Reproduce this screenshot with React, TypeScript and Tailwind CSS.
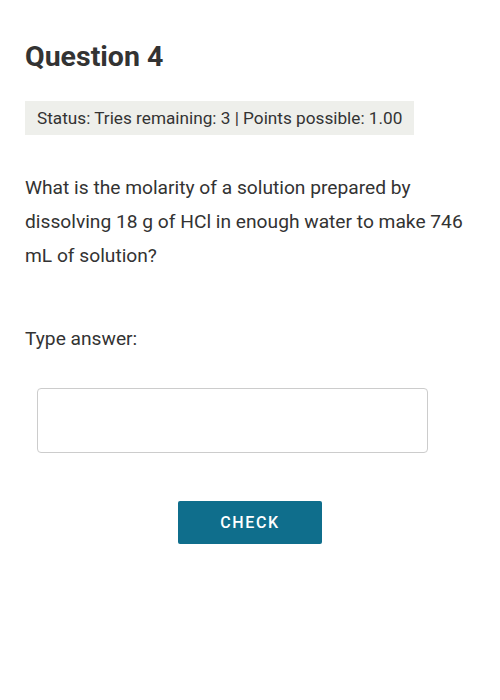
import { useState } from 'react';

export default function App() {
  const [answer, setAnswer] = useState('');

  return (
    <div
      className="w-[500px] h-[700px] bg-white text-[#333333] px-[25px] pt-[40px]"
      style={{ fontFamily: 'Roboto, "Liberation Sans", sans-serif' }}
    >
      {/* Header */}
      <h1 className="text-[28.5px] leading-[34px] font-bold text-[#333333]">Question 4</h1>

      <div className="mt-[27px] inline-block bg-[#eeefeb] px-[12px] py-[6px] text-[17.2px] leading-[22px] text-[#333333]">
        Status: Tries remaining: 3 | Points possible: 1.00
      </div>

      {/* Question body */}
      <p className="mt-[36px] text-[19.2px] leading-[34px] text-[#333333]">
        What is the molarity of a solution prepared by dissolving 18 g of HCl in enough water to make 746
        mL of solution?
      </p>

      <p className="mt-[49px] text-[19.2px] leading-[34px] text-[#333333]">Type answer:</p>

      <div className="mt-[32px] pl-[12px]">
        <input
          value={answer}
          onChange={(e) => setAnswer(e.target.value)}
          className="w-[391px] h-[65px] border border-[#cccccc] rounded-[4px] px-3 text-[18px] outline-none"
        />
      </div>

      <div className="mt-[48px] flex justify-center -ml-[25px] w-[500px]">
        <button className="w-[144px] h-[43px] bg-[#0f6e8c] rounded-[2px] text-white text-[16px] font-medium tracking-[1.6px]">
          CHECK
        </button>
      </div>
    </div>
  );
}
